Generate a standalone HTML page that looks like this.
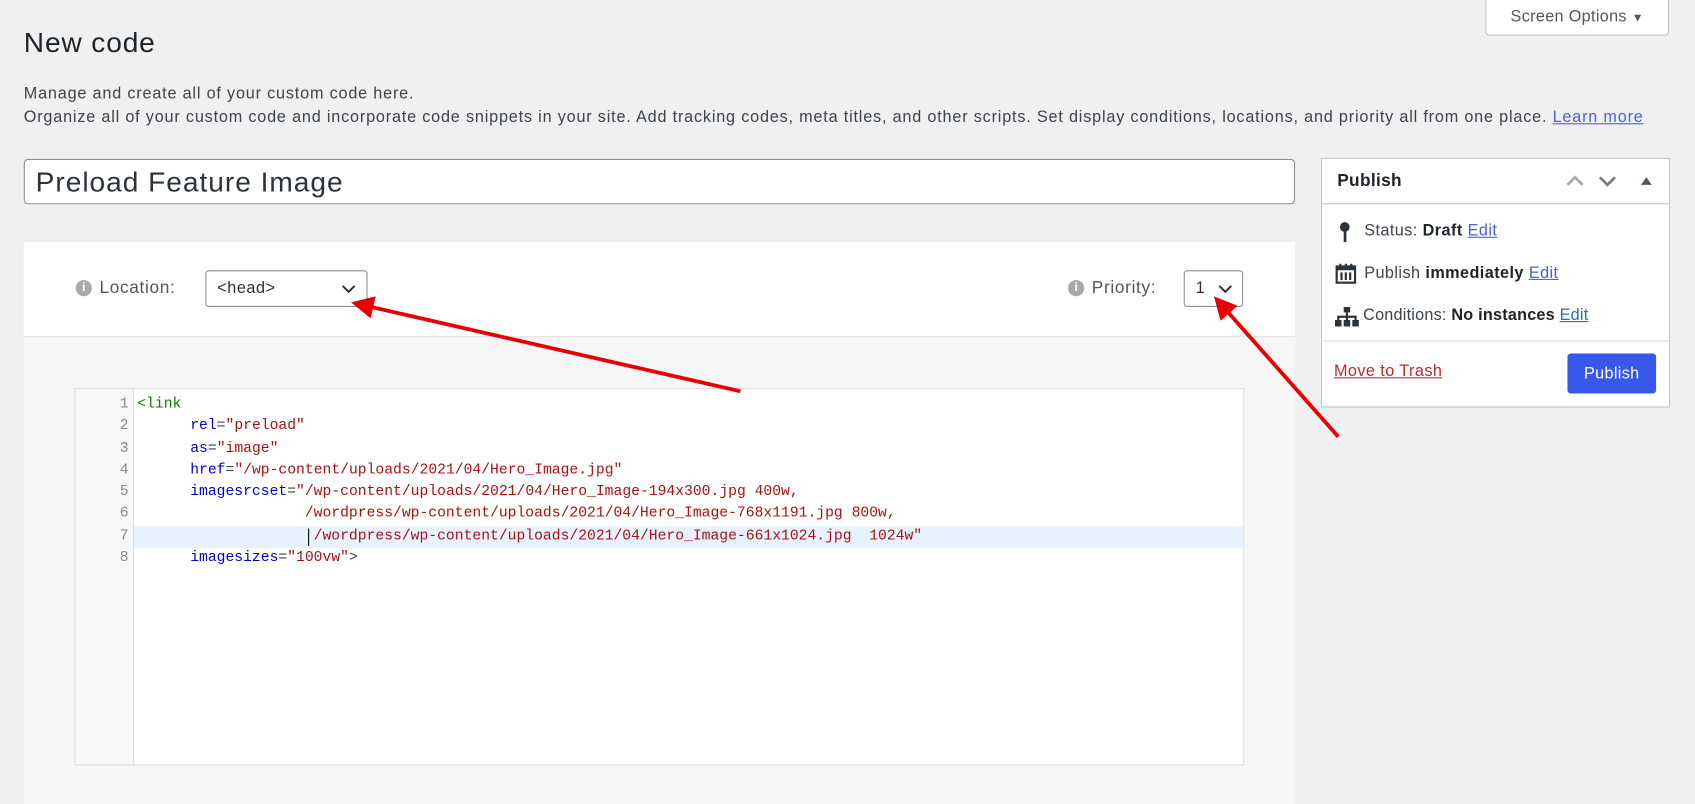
<!DOCTYPE html>
<html><head><style>
html,body{margin:0;padding:0;width:1695px;height:795px;overflow:hidden;background:#f0f0f1;}
#w{position:absolute;left:0;top:0;width:1568px;height:735px;transform:scale(1.081);transform-origin:0 0;font-family:"Liberation Sans",sans-serif;color:#3c434a;}
.a{position:absolute;}
a{color:#4c5fe0;text-decoration:underline;}
.code{font-family:"Liberation Mono",monospace;font-size:13.6px;}
.ln{position:absolute;left:0;width:50px;text-align:right;color:#888;}
.cl{position:absolute;left:58px;white-space:pre;}
.t{color:#117700}.at{color:#0000cc}.s{color:#aa1111}
.sel{position:absolute;border:1px solid #8c8f94;border-radius:3px;background:#fff;height:34px;box-sizing:border-box;font-size:15px;line-height:32px;padding-left:10px;color:#2c3338;letter-spacing:0.5px;}
.p{letter-spacing:0.4px;}
</style></head><body><div id="w">
<div class="a" style="left:22px;top:24px;font-size:26px;color:#1d2327;letter-spacing:0.8px;">New code</div>
<div class="a" style="left:1374px;top:-1px;width:170px;height:34px;box-sizing:border-box;border:1px solid #c3c4c7;border-radius:0 0 4px 4px;background:#fff;font-size:15px;color:#50575e;line-height:32px;text-align:center;letter-spacing:0.3px;">Screen Options <span style="font-size:11px">▼</span></div>
<div class="a" style="left:22px;top:76px;font-size:15px;line-height:22px;color:#3c434a;white-space:nowrap;letter-spacing:0.75px;">Manage and create all of your custom code here.<br>Organize all of your custom code and incorporate code snippets in your site. Add tracking codes, meta titles, and other scripts. Set display conditions, locations, and priority all from one place. <a>Learn more</a></div>
<div class="a" style="left:22px;top:147px;width:1176px;height:42px;box-sizing:border-box;border:1px solid #8c8f94;border-radius:4px;background:#fff;font-size:26px;line-height:40px;padding-left:10px;color:#2c3338;letter-spacing:0.9px;">Preload Feature Image</div>
<div class="a" style="left:22px;top:224px;width:1176px;height:520px;background:#f6f6f6;"></div>
<div class="a" style="left:22px;top:224px;width:1176px;height:87px;background:#fff;border-bottom:1px solid #e0e0e0;"></div>
<div class="a" style="left:70px;top:259px;width:15px;height:15px;border-radius:50%;background:#a7aaad;color:#fff;font-size:11px;line-height:15px;text-align:center;font-weight:bold;">i</div>
<div class="a" style="left:92px;top:258px;font-size:16px;color:#50575e;letter-spacing:0.6px;">Location:</div>
<div class="sel" style="left:190px;top:250px;width:150px;">&lt;head&gt;<svg class="a" style="right:10px;top:12px" width="13" height="9"><path d="M1 1.5L6.5 7L12 1.5" stroke="#2c3338" stroke-width="1.8" fill="none"/></svg></div>
<div class="a" style="left:988px;top:259px;width:15px;height:15px;border-radius:50%;background:#a7aaad;color:#fff;font-size:11px;line-height:15px;text-align:center;font-weight:bold;">i</div>
<div class="a" style="left:1010px;top:258px;font-size:16px;color:#50575e;letter-spacing:0.6px;">Priority:</div>
<div class="sel" style="left:1095px;top:250px;width:55px;">1<svg class="a" style="right:9px;top:12px" width="13" height="9"><path d="M1 1.5L6.5 7L12 1.5" stroke="#2c3338" stroke-width="1.8" fill="none"/></svg></div>
<div class="a" style="left:69px;top:359px;width:1082px;height:349px;box-sizing:border-box;border:1px solid #ddd;background:#fff;"></div>
<div class="a" style="left:70px;top:360px;width:53px;height:347px;background:#f7f7f7;border-right:1px solid #ddd;"></div>
<div class="a" style="left:124px;top:487px;width:1026px;height:20px;background:#e8f2ff;"></div>
<div class="a code" style="left:69px;top:365px;line-height:20.3px;width:1080px;">
<div style="position:relative;height:20.3px"><span class="ln">1</span><span class="cl"><span class="t">&lt;link</span></span></div>
<div style="position:relative;height:20.3px"><span class="ln">2</span><span class="cl">      <span class="at">rel</span>=<span class="s">"preload"</span></span></div>
<div style="position:relative;height:20.3px"><span class="ln">3</span><span class="cl">      <span class="at">as</span>=<span class="s">"image"</span></span></div>
<div style="position:relative;height:20.3px"><span class="ln">4</span><span class="cl">      <span class="at">href</span>=<span class="s">"/wp-content/uploads/2021/04/Hero_Image.jpg"</span></span></div>
<div style="position:relative;height:20.3px"><span class="ln">5</span><span class="cl">      <span class="at">imagesrcset</span>=<span class="s">"/wp-content/uploads/2021/04/Hero_Image-194x300.jpg 400w,</span></span></div>
<div style="position:relative;height:20.3px"><span class="ln">6</span><span class="cl"><span class="s">                   /wordpress/wp-content/uploads/2021/04/Hero_Image-768x1191.jpg 800w,</span></span></div>
<div style="position:relative;height:20.3px"><span class="ln">7</span><span class="cl"><span class="s">                    /wordpress/wp-content/uploads/2021/04/Hero_Image-661x1024.jpg  1024w"</span></span></div>
<div style="position:relative;height:20.3px"><span class="ln">8</span><span class="cl">      <span class="at">imagesizes</span>=<span class="s">"100vw"</span>&gt;</span></div>
</div>
<div class="a" style="left:285px;top:489px;width:1px;height:16px;background:#000;"></div>
<div class="a" style="left:1222px;top:146px;width:323px;height:231px;box-sizing:border-box;border:1px solid #c3c4c7;background:#fff;"></div>
<div class="a" style="left:1223px;top:188px;width:321px;height:1px;background:#c3c4c7;"></div>
<div class="a" style="left:1223px;top:315px;width:321px;height:1px;background:#dcdcde;"></div>
<div class="a" style="left:1237px;top:159px;font-size:16px;font-weight:bold;color:#1d2327;letter-spacing:0.3px;">Publish</div>
<svg class="a" style="left:1447px;top:158px" width="90" height="18"><path d="M3 13 L10 6 L17 13" stroke="#a7aaad" stroke-width="2.5" fill="none"/><path d="M33 6 L40 13 L47 6" stroke="#787c82" stroke-width="2.5" fill="none"/><path d="M71 13 L76 6 L81 13Z" fill="#50575e"/></svg>
<svg class="a" style="left:1238px;top:205px" width="12" height="20"><circle cx="6" cy="5" r="4.5" fill="#2c3338"/><rect x="5" y="8" width="2.5" height="11" fill="#2c3338"/></svg>
<div class="a p" style="left:1262px;top:205px;font-size:15px;">Status: <b style="color:#1d2327">Draft</b> <a>Edit</a></div>
<svg class="a" style="left:1235px;top:243px" width="20" height="20"><rect x="1.5" y="3.5" width="17" height="15" fill="none" stroke="#2c3338" stroke-width="2"/><rect x="1" y="3" width="18" height="4" fill="#2c3338"/><path d="M5 1v4M10 1v4M15 1v4M6 9v7M10 9v7M14 9v7" stroke="#2c3338" stroke-width="2"/></svg>
<div class="a p" style="left:1262px;top:244px;font-size:15px;">Publish <b style="color:#1d2327">immediately</b> <a>Edit</a></div>
<svg class="a" style="left:1234px;top:283px" width="24" height="20"><rect x="9" y="1" width="6" height="5" fill="#2c3338"/><path d="M12 6v4M4 13v-3h16v3M12 10v3" stroke="#2c3338" stroke-width="2" fill="none"/><rect x="1" y="13" width="6" height="6" fill="#2c3338"/><rect x="9" y="13" width="6" height="6" fill="#2c3338"/><rect x="17" y="13" width="6" height="6" fill="#2c3338"/></svg>
<div class="a p" style="left:1261px;top:283px;font-size:15px;letter-spacing:0.2px;">Conditions: <b style="color:#1d2327">No instances</b> <a style="color:#2271b1">Edit</a></div>
<div class="a p" style="left:1234px;top:335px;font-size:15px;"><a style="color:#b32d2e">Move to Trash</a></div>
<div class="a" style="left:1450px;top:327px;width:82px;height:37px;background:#3858e9;border-radius:3px;color:#fff;font-size:15px;line-height:37px;text-align:center;letter-spacing:0.3px;">Publish</div>
<svg class="a" style="left:0;top:0" width="1568" height="735"><defs><marker id="m" markerWidth="6" markerHeight="6" refX="3" refY="3" orient="auto"><path d="M0 0L6 3L0 6Z" fill="#e80000"/></marker></defs>
<path d="M685 362 L335 282" stroke="#e80000" stroke-width="3.5" marker-end="url(#m)"/>
<path d="M1238 404 L1130 282" stroke="#e80000" stroke-width="3.5" marker-end="url(#m)"/></svg>
</div></body></html>
